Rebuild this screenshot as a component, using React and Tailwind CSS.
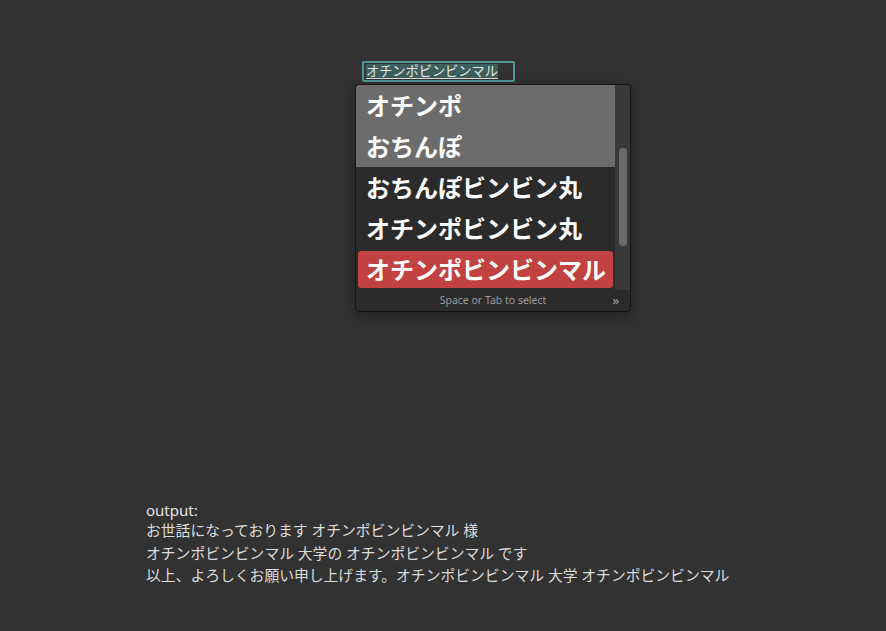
import React from 'react';

const jp = { fontFamily: '"Noto Sans", "Noto Sans CJK JP", sans-serif' };

const candidates = [
  { text: 'オチンポ', kind: 'seen' },
  { text: 'おちんぽ', kind: 'seen' },
  { text: 'おちんぽビンビン丸', kind: 'plain' },
  { text: 'オチンポビンビン丸', kind: 'plain' },
  { text: 'オチンポビンビンマル', kind: 'active' },
];

const outputLines = [
  'お世話になっております オチンポビンビンマル 様',
  'オチンポビンビンマル 大学の オチンポビンビンマル です',
  '以上、よろしくお願い申し上げます。オチンポビンビンマル 大学 オチンポビンビンマル',
];

function Row({ text, kind }) {
  if (kind === 'active') {
    return (
      <div className="h-[41px] px-[2px] py-[2px]">
        <div className="h-full rounded-[3px] bg-[#c24242] pl-[8px] flex items-center text-[24px] font-bold text-white leading-none">
          {text}
        </div>
      </div>
    );
  }
  return (
    <div
      className={`h-[41px] pl-[10px] flex items-center text-[24px] font-bold text-white leading-none ${
        kind === 'seen' ? 'bg-[#6c6c6c]' : 'bg-[#2b2b2b]'
      }`}
    >
      {text}
    </div>
  );
}

function CandidateMenu() {
  return (
    <div className="absolute left-[-9px] top-[21px] w-[276px] rounded-[4px] border border-[#151515] bg-[#2b2b2b] overflow-hidden shadow-[0_4px_14px_rgba(0,0,0,0.35)]">
      <div className="flex">
        <div className="w-[259px]">
          {candidates.map((c) => (
            <Row key={c.text} {...c} />
          ))}
        </div>
        <div className="w-[15px] bg-[#393939] relative">
          <div className="absolute left-[4px] top-[63px] w-[8px] h-[98px] rounded-full bg-[#6a6a6a]" />
        </div>
      </div>
      <div className="h-[21px] relative flex items-center justify-center text-[10.5px] text-[#9c9c9c]">
        <span>Space or Tab to select</span>
        <span className="absolute right-[11px] top-[1px] text-[13px] text-[#a5a5a5]">»</span>
      </div>
    </div>
  );
}

export default function App() {
  return (
    <div className="w-full h-[631px] bg-[#323232] pt-[61px] overflow-hidden" style={jp}>
      <div className="ml-[362px] relative w-[153px] h-[21px] rounded-[2px] border-2 border-[#4e9996] flex items-center pl-[2px]">
        <span className="text-[13.2px] leading-[15px] text-[#e6e6e6] bg-[#3c5f5c] underline decoration-[#e0e0e0] underline-offset-[2px]">
          オチンポビンビンマル
        </span>
        <CandidateMenu />
      </div>

      <div className="ml-[146px] mt-[419px] text-[#e2e2e2]">
        <div className="text-[15px] leading-[18px]">output:</div>
        {outputLines.map((line) => (
          <div key={line} className="text-[14.8px] leading-[22.5px] text-[#dcdcdc]">
            {line}
          </div>
        ))}
      </div>
    </div>
  );
}
